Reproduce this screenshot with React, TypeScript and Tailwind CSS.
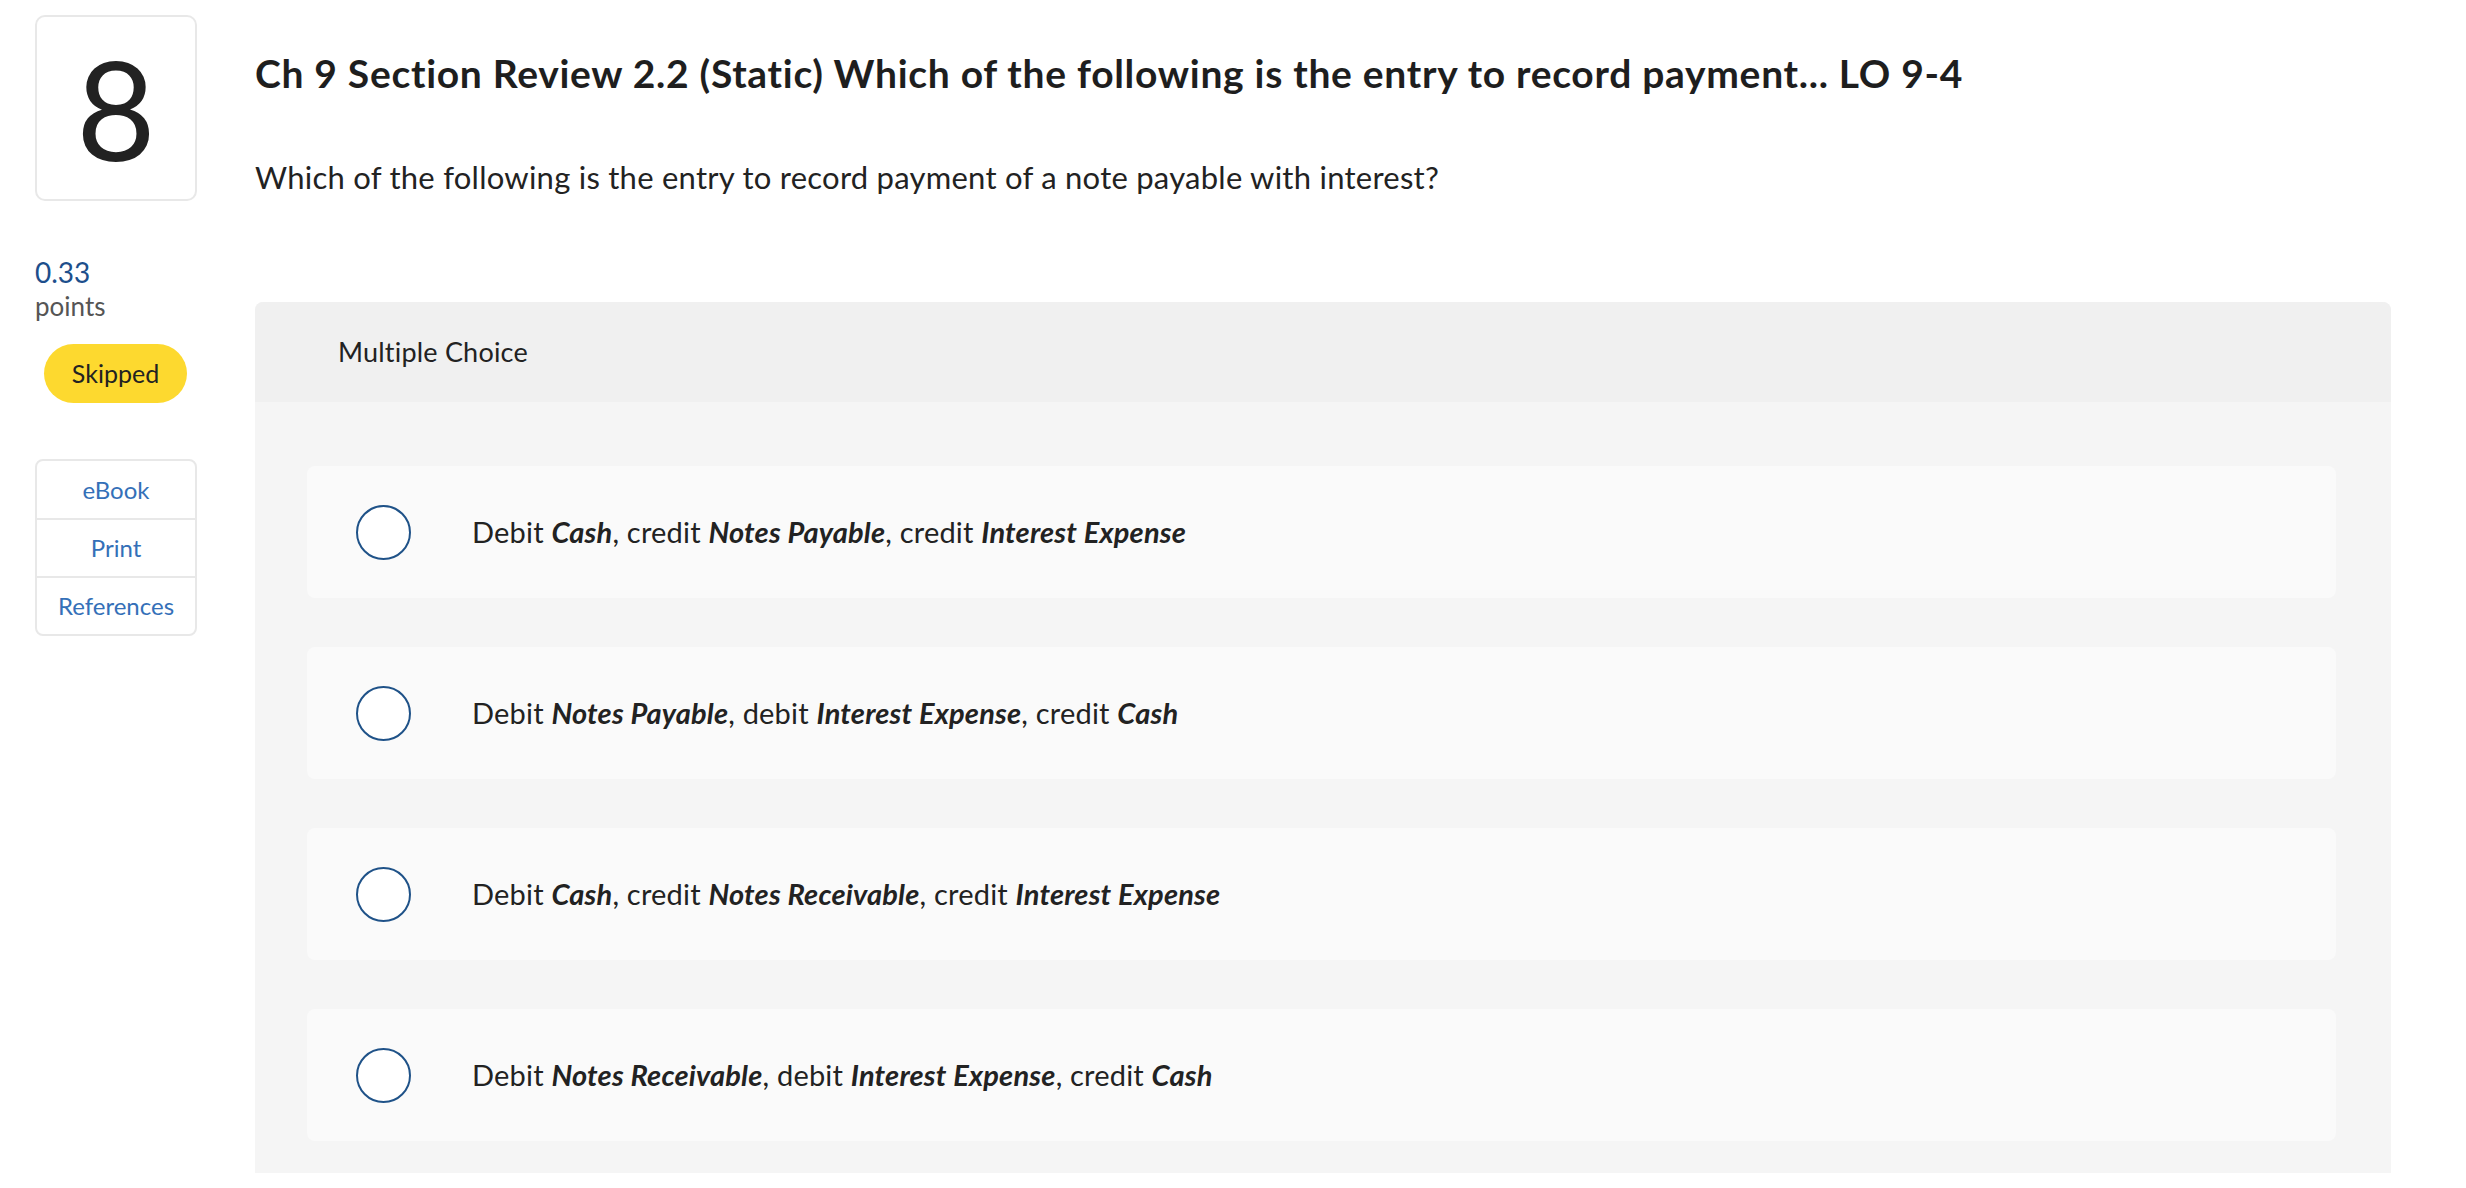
const options = [
  [
    { t: "Debit ", b: false },
    { t: "Cash", b: true },
    { t: ", credit ", b: false },
    { t: "Notes Payable", b: true },
    { t: ", credit ", b: false },
    { t: "Interest Expense", b: true },
  ],
  [
    { t: "Debit ", b: false },
    { t: "Notes Payable", b: true },
    { t: ", debit ", b: false },
    { t: "Interest Expense", b: true },
    { t: ", credit ", b: false },
    { t: "Cash", b: true },
  ],
  [
    { t: "Debit ", b: false },
    { t: "Cash", b: true },
    { t: ", credit ", b: false },
    { t: "Notes Receivable", b: true },
    { t: ", credit ", b: false },
    { t: "Interest Expense", b: true },
  ],
  [
    { t: "Debit ", b: false },
    { t: "Notes Receivable", b: true },
    { t: ", debit ", b: false },
    { t: "Interest Expense", b: true },
    { t: ", credit ", b: false },
    { t: "Cash", b: true },
  ],
];

function Sidebar() {
  return (
    <aside className="ml-[35px] flex w-[162px] shrink-0 flex-col pt-[15px]">
      <div className="flex h-[186px] w-[162px] items-center justify-center rounded-[10px] border-2 border-[#e8e8e8] text-[137px] leading-none text-[#222]">
        8
      </div>
      <div className="mt-[54px] text-[28px] leading-[34px] text-[#1d4f8c]">0.33</div>
      <div className="text-[26px] leading-[34px] text-[#555]">points</div>
      <div className="mt-[21px] ml-[9px] flex h-[59px] w-[143px] items-center justify-center rounded-full bg-[#fdd92f] text-[25px] text-[#222]">
        Skipped
      </div>
      <div className="mt-[56px] flex flex-col rounded-[8px] border-2 border-[#e8e8e8] text-[24px] text-[#3470b8]">
        <span className="flex h-[59px] items-center justify-center border-b-2 border-[#e8e8e8]">eBook</span>
        <span className="flex h-[58px] items-center justify-center border-b-2 border-[#e8e8e8]">Print</span>
        <span className="flex h-[56px] items-center justify-center">References</span>
      </div>
    </aside>
  );
}

export default function App() {
  return (
    <div className="flex min-h-screen bg-white font-['Lato',sans-serif] text-[#222]">
      <Sidebar />
      <main className="ml-[58px] flex w-[2136px] flex-col pt-[50px]">
        <h1 className="text-[39px] leading-[46px] font-bold tracking-[0.7px] text-[#1e1e1e]">
          Ch 9 Section Review 2.2 (Static) Which of the following is the entry to record payment... LO 9-4
        </h1>
        <p className="mt-[63px] text-[31px] leading-[36px] tracking-[0.25px]">
          Which of the following is the entry to record payment of a note payable with interest?
        </p>

        <section className="mt-[107px] overflow-hidden rounded-t-[8px] bg-[#f5f5f5]">
          <div className="flex h-[100px] items-center bg-[#f0f0f0] pl-[83px] text-[27px] tracking-[0.2px]">
            Multiple Choice
          </div>
          <div className="flex flex-col gap-[49px] pt-[64px] pr-[55px] pb-[32px] pl-[52px]">
            {options.map((opt, i) => (
              <div key={i} className="flex h-[132px] items-center rounded-[8px] bg-[#fafafa] pl-[49px]">
                <span className="h-[55px] w-[55px] shrink-0 rounded-full border-2 border-[#1f5288] bg-white" />
                <span className="ml-[61px] text-[29px] tracking-[0.2px]">
                  {opt.map((p, j) =>
                    p.b ? (
                      <b key={j} className="font-bold italic">
                        {p.t}
                      </b>
                    ) : (
                      <span key={j}>{p.t}</span>
                    )
                  )}
                </span>
              </div>
            ))}
          </div>
        </section>
      </main>
    </div>
  );
}
